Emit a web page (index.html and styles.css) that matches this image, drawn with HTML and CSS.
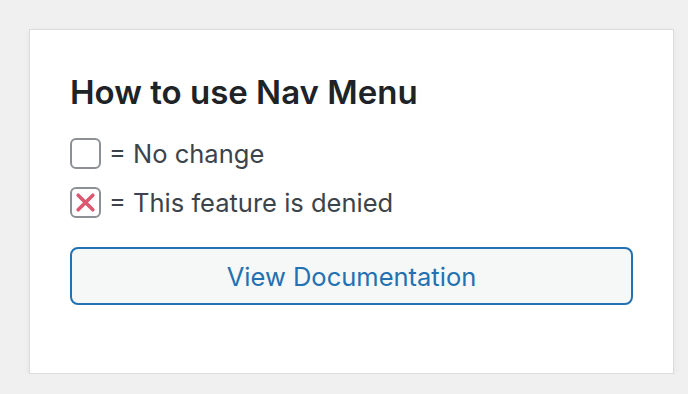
FILE: index.html
```html
<!DOCTYPE html>
<html lang="en">
<head>
    <meta charset="UTF-8">
    <title>Nav Menu help</title>
    <link rel="stylesheet" href="styles.css">
</head>
<body>
    <div class="postbox">
        <h2 class="postbox-title">How to use Nav Menu</h2>
        <ul class="legend">
            <li class="legend-row">
                <span class="box"></span>
                <span>= No change</span>
            </li>
            <li class="legend-row">
                <span class="box denied">
                    <svg viewBox="0 0 20 20" width="21" height="21">
                        <path d="M3 3 L17 17 M17 3 L3 17" stroke="#dc5870" stroke-width="3.4" stroke-linecap="round"/>
                    </svg>
                </span>
                <span>= This feature is denied</span>
            </li>
        </ul>
        <a class="doc-btn" href="#">View Documentation</a>
    </div>
</body>
</html>
```

FILE: styles.css
```css
body {
    margin: 0;
    padding: 29px 0 0 29px;
    background: #f0f0f1;
    font-family: Inter, 'Liberation Sans', Arial, sans-serif;
    color: #3c434a;
}

.postbox {
    box-sizing: border-box;
    width: 645px;
    height: 345px;
    background: #fff;
    border: 1px solid #dcdcde;
    box-shadow: 0 2px 6px rgba(0,0,0,0.06);
    padding: 44px 40px 0 40px;
}

.postbox-title {
    margin: 0 0 28px;
    font-size: 33px;
    font-weight: 600;
    line-height: 36px;
    color: #1d2327;
}

.legend {
    list-style: none;
    margin: 0;
    padding: 0;
}

.legend-row {
    display: flex;
    align-items: center;
    gap: 8px;
    height: 31px;
    margin-bottom: 18px;
    font-size: 25.5px;
}

.box {
    box-sizing: border-box;
    width: 31px;
    height: 31px;
    border: 2px solid #8c8f94;
    border-radius: 6px;
    background: #fff;
    display: flex;
    align-items: center;
    justify-content: center;
}

.doc-btn {
    display: flex;
    align-items: center;
    justify-content: center;
    box-sizing: border-box;
    height: 58px;
    margin-top: 29px;
    border: 2px solid #2271b1;
    border-radius: 8px;
    background: #f6f7f7;
    color: #2271b1;
    font-size: 25.5px;
    text-decoration: none;
}
```
